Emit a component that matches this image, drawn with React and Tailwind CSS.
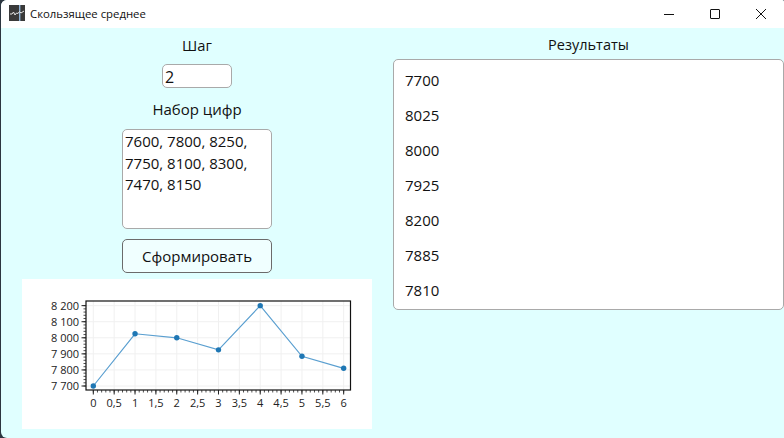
const FONT = 'font-["Open_Sans","Noto_Sans",sans-serif]';

function AppIcon() {
  return (
    <svg width="16" height="16" viewBox="0 0 16 16" className="block">
      <rect width="16" height="16" fill="#3a3a3a" />
      <rect x="10" y="0" width="1.4" height="16" fill="#8fb4d8" />
      <path d="M1 9 L3 9 L4.5 7 L6 10 L7.5 8 L9 8.5 L10.5 6.5 L12 8 L15 6" fill="none" stroke="#e4e4e4" strokeWidth="1" />
    </svg>
  );
}

function Chart() {
  const X0 = 93.3 - 22, UX = 41.73, Y0 = 386 - 279, UY = 16.07;
  const L = 64, R = 328.5, T = 22, B = 111;
  const px = (v) => X0 + v * UX;
  const py = (v) => Y0 - ((v - 7700) / 100) * UY;
  const data = [7700, 8025, 8000, 7925, 8200, 7885, 7810];
  const xs = Array.from({ length: 13 }, (_, i) => i / 2);
  const ys = [7700, 7800, 7900, 8000, 8100, 8200];
  const xMinor = Array.from({ length: 61 }, (_, i) => i / 10);
  const yMinor = Array.from({ length: 26 }, (_, i) => 7700 + i * 20);
  return (
    <svg width="350" height="150" viewBox="0 0 350 150" className="block">
      {xs.map((v) => (
        <line key={v} x1={px(v)} x2={px(v)} y1={T} y2={B} stroke="#f0f0f0" strokeWidth="1" />
      ))}
      {ys.map((v) => (
        <line key={v} x1={L} x2={R} y1={py(v)} y2={py(v)} stroke="#f0f0f0" strokeWidth="1" />
      ))}
      <polyline
        points={data.map((v, i) => `${px(i)},${py(v)}`).join(" ")}
        fill="none"
        stroke="#5a9fd0"
        strokeWidth="1.2"
      />
      {data.map((v, i) => (
        <circle key={i} cx={px(i)} cy={py(v)} r="2.7" fill="#1f77b4" />
      ))}
      <rect x={L} y={T} width={R - L} height={B - T} fill="none" stroke="#111" strokeWidth="1.2" />
      {xMinor.map((v) => (
        <line key={v} x1={px(v)} x2={px(v)} y1={B} y2={B + 2.5} stroke="#222" strokeWidth="0.8" />
      ))}
      {xs.map((v) => (
        <line key={v} x1={px(v)} x2={px(v)} y1={B} y2={B + 4.5} stroke="#222" strokeWidth="1" />
      ))}
      {yMinor.map((v) => (
        <line key={v} x1={L - 2.5} x2={L} y1={py(v)} y2={py(v)} stroke="#222" strokeWidth="0.8" />
      ))}
      {ys.map((v) => (
        <line key={v} x1={L - 4.5} x2={L} y1={py(v)} y2={py(v)} stroke="#222" strokeWidth="1" />
      ))}
      {xs.map((v) => (
        <text key={v} x={px(v)} y={128} textAnchor="middle" fontSize="11" fill="#222" fontFamily="Open Sans, sans-serif">
          {String(v).replace(".", ",")}
        </text>
      ))}
      {ys.map((v) => (
        <text key={v} x={L - 7} y={py(v) + 4} textAnchor="end" fontSize="11" fill="#222" fontFamily="Open Sans, sans-serif">
          {String(v).replace(/(\d)(\d{3})/, "$1 $2")}
        </text>
      ))}
    </svg>
  );
}

export default function App() {
  const results = [7700, 8025, 8000, 7925, 8200, 7885, 7810];
  return (
    <div className={`w-[784px] h-[438px] overflow-hidden flex bg-[#2c3640] pl-px text-[#111] ${FONT}`}>
      <div className="flex-1 flex flex-col overflow-hidden bg-[#e0ffff] rounded-tl-[6px] rounded-tr-[2px] rounded-bl-[6px]">
        <div className="h-7 shrink-0 bg-white flex items-center">
          <div className="ml-[8px] mr-[5px] mb-[2px]"><AppIcon /></div>
          <span className="text-[11.35px] leading-none">Скользящее среднее</span>
          <div className="ml-auto flex items-center">
            <div className="w-[46px] h-7 flex items-center justify-center">
              <div className="w-[10px] h-px bg-[#111]" />
            </div>
            <div className="w-[46px] h-7 flex items-center justify-center">
              <div className="w-[10px] h-[10px] border border-[#111] rounded-[1px]" />
            </div>
            <div className="w-[46px] h-7 flex items-center justify-center">
              <svg width="10" height="10" viewBox="0 0 10 10"><path d="M0 0 L10 10 M10 0 L0 10" stroke="#111" strokeWidth="1" /></svg>
            </div>
          </div>
        </div>
        <div className="flex flex-1">
          <div className="w-[392px] shrink-0 flex flex-col items-center">
            <div className="mt-[7px] h-5 text-[14.8px] leading-5 text-center">Шаг</div>
            <div className="mt-[9px] w-[70px] h-6 bg-white border border-[#a9a9a9] rounded-[5px] pl-[2px] text-[16px] leading-[24px]">2</div>
            <div className="mt-[11px] h-5 text-[15px] leading-5 text-center">Набор цифр</div>
            <div className="mt-[10px] w-[150px] h-[100px] bg-white border border-[#a9a9a9] rounded-[5px] pl-[2px] text-[15px] leading-[21.5px] whitespace-pre-line pt-[1px]">
              {"7600, 7800, 8250,\n7750, 8100, 8300,\n7470, 8150"}
            </div>
            <div className="mt-[10px] w-[150px] h-[34px] bg-[#f0ffff] border border-[#6b6b6b] rounded-[5px] flex items-center justify-center text-[15px]">Сформировать</div>
            <div className="mt-[6px] w-[350px] h-[150px] bg-white"><Chart /></div>
          </div>
          <div className="flex-1 flex flex-col">
            <div className="mt-[7px] h-5 text-[14.5px] leading-5 text-center">Результаты</div>
            <div className="mt-[4px] h-[251px] bg-white border border-[#a9a9a9] rounded-[5px] pl-[11px] pt-[3px] text-[15px]">
              {results.map((r) => (
                <div key={r} className="h-[35px] flex items-center">{r}</div>
              ))}
            </div>
          </div>
        </div>
      </div>
    </div>
  );
}
